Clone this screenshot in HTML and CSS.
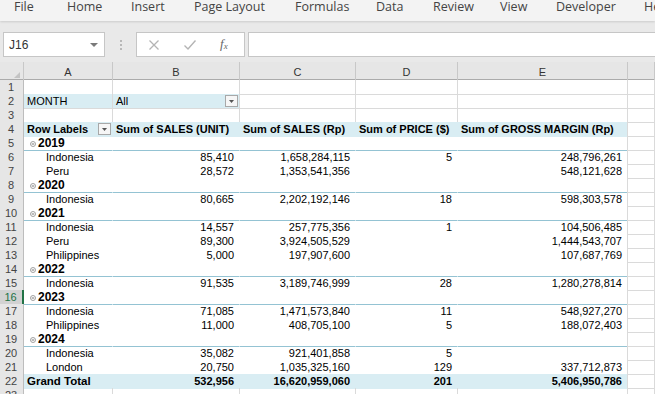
FILE: index.html
```html
<!DOCTYPE html>
<html>
<head>
<meta charset="utf-8">
<link rel="stylesheet" href="styles.css">
</head>
<body>
<div class="menubar">
  <span class="mi m-file">File</span>
  <span class="mi m-home">Home</span>
  <span class="mi m-insert">Insert</span>
  <span class="mi m-page">Page Layout</span>
  <span class="mi m-form">Formulas</span>
  <span class="mi m-data">Data</span>
  <span class="mi m-review">Review</span>
  <span class="mi m-view">View</span>
  <span class="mi m-dev">Developer</span>
  <span class="mi">He</span>
</div>
<div class="fbar">
  <div class="namebox"><span>J16</span><svg class="nbarrow" width="8" height="5" viewBox="0 0 8 5"><path d="M0 0H8L4 4Z" fill="#7a7a7a"/></svg></div>
  <div class="dots"><i></i><i></i><i></i></div>
  <div class="fbtns">
    <svg width="12" height="12" viewBox="0 0 12 12"><path d="M1.5 1.5L10.5 10.5M10.5 1.5L1.5 10.5" stroke="#b4b4b4" stroke-width="1.3"/></svg>
    <svg width="14" height="12" viewBox="0 0 14 12"><path d="M1.5 6.5L5 10L12.5 1.5" stroke="#b4b4b4" stroke-width="1.4" fill="none"/></svg>
    <span class="fx">f<sub>x</sub></span>
  </div>
  <div class="finput"></div>
</div>
<div class="colhead">
  <div class="corner"><svg width="6" height="6" viewBox="0 0 6 6"><path d="M6 0V6H0Z" fill="#c4c4c4"/></svg></div>
  <div class="ch">A</div><div class="ch">B</div><div class="ch">C</div><div class="ch">D</div><div class="ch">E</div><div class="ch"></div>
</div>
<div class="sheet">
  <div class="row"><div class="rh">1</div><div class="c"></div><div class="c"></div><div class="c"></div><div class="c"></div><div class="c"></div><div class="c"></div></div>
  <div class="row"><div class="rh">2</div><div class="c hl">MONTH</div><div class="c hl dd">All<span class="ddb"><svg width="5" height="3" viewBox="0 0 5 3"><path d="M0 0H5L2.5 3Z" fill="#555"/></svg></span></div><div class="c"></div><div class="c"></div><div class="c"></div><div class="c"></div></div>
  <div class="row"><div class="rh">3</div><div class="c"></div><div class="c"></div><div class="c"></div><div class="c"></div><div class="c"></div><div class="c"></div></div>
  <div class="row"><div class="rh">4</div><div class="c p hd dd">Row Labels<span class="ddb"><svg width="5" height="3" viewBox="0 0 5 3"><path d="M0 0H5L2.5 3Z" fill="#555"/></svg></span></div><div class="c p hd">Sum of SALES (UNIT)</div><div class="c p hd">Sum of SALES (Rp)</div><div class="c p hd">Sum of PRICE ($)</div><div class="c p pe hd">Sum of GROSS MARGIN (Rp)</div><div class="c"></div></div>
  <div class="row"><div class="rh">5</div><div class="c p yb yr"><svg class="col" width="6" height="6" viewBox="0 0 6 6"><circle cx="3" cy="3" r="2.5" fill="none" stroke="#8a8a8a" stroke-width="0.8"/><path d="M1.8 3H4.2" stroke="#666" stroke-width="0.9"/></svg>2019</div><div class="c p yb"></div><div class="c p yb"></div><div class="c p yb"></div><div class="c p pe yb"></div><div class="c"></div></div>
  <div class="row"><div class="rh">6</div><div class="c p ind">Indonesia</div><div class="c p n">85,410</div><div class="c p n">1,658,284,115</div><div class="c p n">5</div><div class="c p pe n">248,796,261</div><div class="c"></div></div>
  <div class="row"><div class="rh">7</div><div class="c p ind">Peru</div><div class="c p n">28,572</div><div class="c p n">1,353,541,356</div><div class="c p n"></div><div class="c p pe n">548,121,628</div><div class="c"></div></div>
  <div class="row"><div class="rh">8</div><div class="c p yb yr"><svg class="col" width="6" height="6" viewBox="0 0 6 6"><circle cx="3" cy="3" r="2.5" fill="none" stroke="#8a8a8a" stroke-width="0.8"/><path d="M1.8 3H4.2" stroke="#666" stroke-width="0.9"/></svg>2020</div><div class="c p yb"></div><div class="c p yb"></div><div class="c p yb"></div><div class="c p pe yb"></div><div class="c"></div></div>
  <div class="row"><div class="rh">9</div><div class="c p ind">Indonesia</div><div class="c p n">80,665</div><div class="c p n">2,202,192,146</div><div class="c p n">18</div><div class="c p pe n">598,303,578</div><div class="c"></div></div>
  <div class="row"><div class="rh">10</div><div class="c p yb yr"><svg class="col" width="6" height="6" viewBox="0 0 6 6"><circle cx="3" cy="3" r="2.5" fill="none" stroke="#8a8a8a" stroke-width="0.8"/><path d="M1.8 3H4.2" stroke="#666" stroke-width="0.9"/></svg>2021</div><div class="c p yb"></div><div class="c p yb"></div><div class="c p yb"></div><div class="c p pe yb"></div><div class="c"></div></div>
  <div class="row"><div class="rh">11</div><div class="c p ind">Indonesia</div><div class="c p n">14,557</div><div class="c p n">257,775,356</div><div class="c p n">1</div><div class="c p pe n">104,506,485</div><div class="c"></div></div>
  <div class="row"><div class="rh">12</div><div class="c p ind">Peru</div><div class="c p n">89,300</div><div class="c p n">3,924,505,529</div><div class="c p n"></div><div class="c p pe n">1,444,543,707</div><div class="c"></div></div>
  <div class="row"><div class="rh">13</div><div class="c p ind">Philippines</div><div class="c p n">5,000</div><div class="c p n">197,907,600</div><div class="c p n"></div><div class="c p pe n">107,687,769</div><div class="c"></div></div>
  <div class="row"><div class="rh">14</div><div class="c p yb yr"><svg class="col" width="6" height="6" viewBox="0 0 6 6"><circle cx="3" cy="3" r="2.5" fill="none" stroke="#8a8a8a" stroke-width="0.8"/><path d="M1.8 3H4.2" stroke="#666" stroke-width="0.9"/></svg>2022</div><div class="c p yb"></div><div class="c p yb"></div><div class="c p yb"></div><div class="c p pe yb"></div><div class="c"></div></div>
  <div class="row"><div class="rh">15</div><div class="c p ind">Indonesia</div><div class="c p n">91,535</div><div class="c p n">3,189,746,999</div><div class="c p n">28</div><div class="c p pe n">1,280,278,814</div><div class="c"></div></div>
  <div class="row"><div class="rh sel">16</div><div class="c p yb yr"><svg class="col" width="6" height="6" viewBox="0 0 6 6"><circle cx="3" cy="3" r="2.5" fill="none" stroke="#8a8a8a" stroke-width="0.8"/><path d="M1.8 3H4.2" stroke="#666" stroke-width="0.9"/></svg>2023</div><div class="c p yb"></div><div class="c p yb"></div><div class="c p yb"></div><div class="c p pe yb"></div><div class="c"></div></div>
  <div class="row"><div class="rh">17</div><div class="c p ind">Indonesia</div><div class="c p n">71,085</div><div class="c p n">1,471,573,840</div><div class="c p n">11</div><div class="c p pe n">548,927,270</div><div class="c"></div></div>
  <div class="row"><div class="rh">18</div><div class="c p ind">Philippines</div><div class="c p n">11,000</div><div class="c p n">408,705,100</div><div class="c p n">5</div><div class="c p pe n">188,072,403</div><div class="c"></div></div>
  <div class="row"><div class="rh">19</div><div class="c p yb yr"><svg class="col" width="6" height="6" viewBox="0 0 6 6"><circle cx="3" cy="3" r="2.5" fill="none" stroke="#8a8a8a" stroke-width="0.8"/><path d="M1.8 3H4.2" stroke="#666" stroke-width="0.9"/></svg>2024</div><div class="c p yb"></div><div class="c p yb"></div><div class="c p yb"></div><div class="c p pe yb"></div><div class="c"></div></div>
  <div class="row"><div class="rh">20</div><div class="c p ind">Indonesia</div><div class="c p n">35,082</div><div class="c p n">921,401,858</div><div class="c p n">5</div><div class="c p pe n"></div><div class="c"></div></div>
  <div class="row"><div class="rh">21</div><div class="c p yb ind">London</div><div class="c p yb n">20,750</div><div class="c p yb n">1,035,325,160</div><div class="c p yb n">129</div><div class="c p pe yb n">337,712,873</div><div class="c"></div></div>
  <div class="row"><div class="rh">22</div><div class="c p hd gt">Grand Total</div><div class="c p hd n">532,956</div><div class="c p hd n">16,620,959,060</div><div class="c p hd n">201</div><div class="c p pe hd n">5,406,950,786</div><div class="c"></div></div>
  <div class="row"><div class="rh">23</div><div class="c"></div><div class="c"></div><div class="c"></div><div class="c"></div><div class="c"></div><div class="c"></div></div>
</div>
</body>
</html>
```
FILE: styles.css
```css
* { box-sizing: border-box; }
html, body { margin: 0; padding: 0; }
body {
  width: 655px;
  height: 394px;
  overflow: hidden;
  background: #ffffff;
  font-family: "Liberation Sans", Arial, sans-serif;
}

/* menu */
.menubar {
  height: 21px;
  background: #f3f3f3;
  display: flex;
  align-items: flex-start;
  padding-left: 14px;
  font-family: "Open Sans", "Noto Sans", sans-serif;
  font-size: 12.5px;
  line-height: 14px;
  color: #444;
  box-shadow: 0 1px 2px rgba(0,0,0,0.12);
  position: relative;
  z-index: 1;
  white-space: nowrap;
}
.mi { flex: none; }
.m-file { width: 53px; }
.m-home { width: 64px; }
.m-insert { width: 63px; }
.m-page { width: 101px; }
.m-form { width: 81px; }
.m-data { width: 57px; }
.m-review { width: 67px; }
.m-view { width: 56px; }
.m-dev { width: 88px; }

/* formula bar */
.fbar {
  height: 41px;
  background: #e9e9e9;
  display: flex;
  align-items: flex-start;
  padding-top: 11px;
  padding-left: 3px;
}
.namebox {
  width: 102px;
  height: 25px;
  background: #fff;
  border: 1px solid #c6c6c6;
  display: flex;
  align-items: center;
  justify-content: space-between;
  padding: 0 6px 0 5px;
  font-size: 12px;
  color: #333;
}
.nbarrow { margin-top: 1px; }
.dots {
  width: 31px;
  height: 25px;
  display: flex;
  flex-direction: column;
  align-items: center;
  justify-content: center;
  gap: 2px;
}
.dots i {
  display: block;
  width: 2px;
  height: 2px;
  background: #b8b8b8;
}
.fbtns {
  width: 109px;
  height: 25px;
  background: #fff;
  border: 1px solid #c6c6c6;
  display: flex;
  align-items: center;
  padding-left: 11px;
  gap: 23px;
}
.fx {
  font-family: "Liberation Serif", "DejaVu Serif", serif;
  font-style: italic;
  font-size: 13px;
  color: #666;
  line-height: 12px;
}
.fx sub { font-size: 9px; vertical-align: -1px; }
.finput {
  margin-left: 3px;
  flex: 1;
  height: 25px;
  background: #fff;
  border: 1px solid #c6c6c6;
  border-right: none;
}

/* column headers */
.colhead, .row {
  display: grid;
  grid-template-columns: 24px 89px 127px 116px 102px 170px 1fr;
}
.colhead {
  height: 18px;
  background: #e6e6e6;
  border-bottom: 1px solid #ababab;
}
.corner {
  border-right: 1px solid #c8c8c8;
  display: flex;
  align-items: flex-end;
  justify-content: flex-end;
  padding: 0 3px 3px 0;
}
.ch {
  border-right: 1px solid #c8c8c8;
  text-align: center;
  font-size: 11px;
  line-height: 18px;
  color: #333;
  padding-top: 1px;
}

/* sheet */
.row { height: 14px; }
.rh {
  background: #e6e6e6;
  border-right: 1px solid #bdbdbd;
  border-bottom: 1px solid #d0d0d0;
  text-align: center;
  font-size: 11px;
  line-height: 14px;
  color: #444;
  padding-right: 1px;
}
.rh.sel {
  background: #d2d2d2;
  border-right: 2px solid #217346;
  color: #217346;
}
.c {
  border-right: 1px solid #dadada;
  border-bottom: 1px solid #dadada;
  padding: 0 3px;
  font-size: 11px;
  line-height: 14px;
  color: #000;
  white-space: nowrap;
  overflow: hidden;
}
.p { border-right-color: transparent; border-bottom-color: transparent; }
.pe { border-right-color: #dadada; }
.yb { border-bottom-color: #94c3d3; }
.hl { background: #d9edf3; }
.hd { background: #d9edf3; font-weight: bold; }
.gt { font-size: 11.5px; }
.n { text-align: right; padding-right: 5px; }
.ind { padding-left: 22px; }
.yr {
  font-weight: bold;
  font-size: 12px;
  padding-left: 6px;
  display: flex;
  align-items: center;
  gap: 2px;
}
.col { margin-top: 2px; flex: none; }
.dd {
  display: flex;
  align-items: center;
  justify-content: space-between;
  padding-right: 1px;
}
.ddb {
  width: 13px;
  height: 12px;
  border: 1px solid #a8a8a8;
  background: #f6f6f6;
  display: flex;
  align-items: center;
  justify-content: center;
  flex: none;
}
```
